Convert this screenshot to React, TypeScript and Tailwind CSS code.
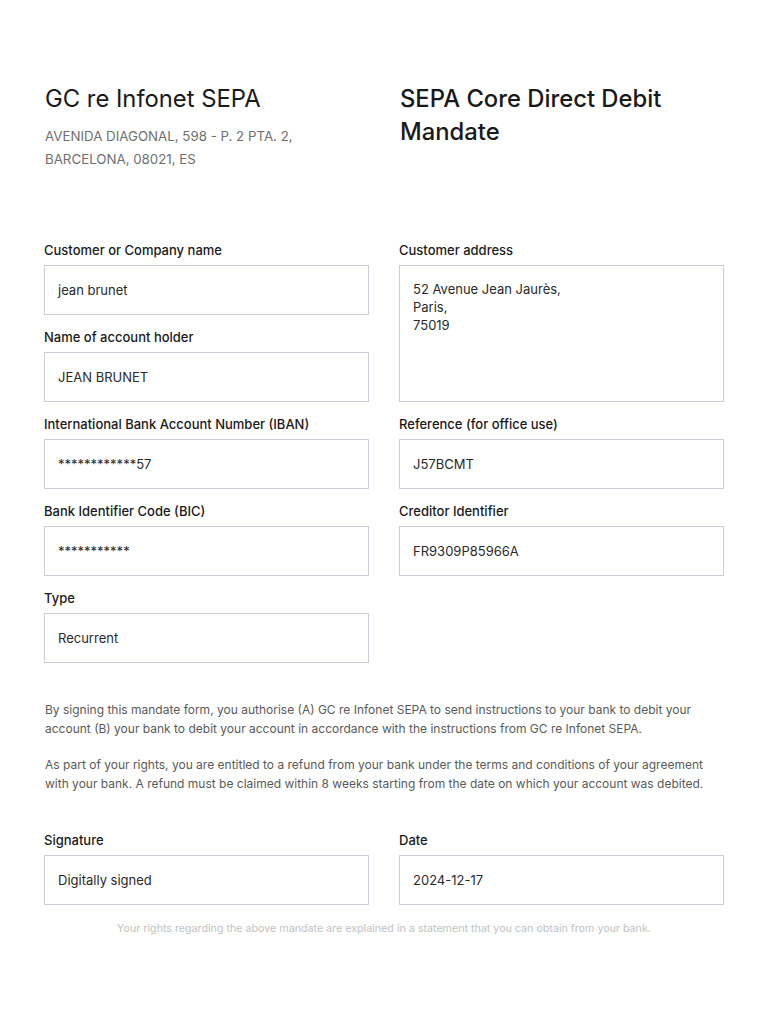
import React from "react";

const Field = ({ label, value, tall }: { label: string; value: React.ReactNode; tall?: boolean }) => (
  <div className="flex flex-col">
    <div className="h-[20px] leading-[20px] text-[13px] font-medium text-[#1a1a1a]">{label}</div>
    <div
      className={`mt-[5px] border border-[#c8cfd8] px-[13px] flex ${tall ? "h-[137px] items-start pt-[14px]" : "h-[50px] items-center"} text-[13px] text-[#2a2a2a] leading-[18px]`}
    >
      <div>{value}</div>
    </div>
  </div>
);

export default function App() {
  return (
    <div
      className="w-[768px] min-h-[1024px] bg-white px-[44px] pt-[82px]"
      style={{ fontFamily: "Inter, 'Open Sans', sans-serif" }}
    >
      <div className="grid grid-cols-2 gap-x-[30px]">
        <div>
          <div className="text-[23.8px] leading-[33px] text-[#1a1a1a] ml-[1px]">GC re Infonet SEPA</div>
          <div className="mt-[10px] text-[13.3px] leading-[23px] text-[#6f6f6f] uppercase ml-[1px]">
            <div>Avenida Diagonal, 598 - P. 2 PTA. 2,</div>
            <div>Barcelona, 08021, ES</div>
          </div>
        </div>
        <div>
          <div className="text-[23.8px] leading-[33px] font-medium text-[#1a1a1a] ml-[1px]">
            SEPA Core Direct Debit
            <br />
            Mandate
          </div>
        </div>
      </div>

      <div className="mt-[69px] grid grid-cols-2 gap-x-[30px]">
        <div className="flex flex-col gap-y-[12px]">
          <Field label="Customer or Company name" value="jean brunet" />
          <Field label="Name of account holder" value="JEAN BRUNET" />
          <Field label="International Bank Account Number (IBAN)" value="************57" />
          <Field label="Bank Identifier Code (BIC)" value="***********" />
          <Field label="Type" value="Recurrent" />
        </div>
        <div className="flex flex-col gap-y-[12px]">
          <Field
            label="Customer address"
            tall
            value={
              <>
                <div>52 Avenue Jean Jaurès,</div>
                <div>Paris,</div>
                <div>75019</div>
              </>
            }
          />
          <Field label="Reference (for office use)" value="J57BCMT" />
          <Field label="Creditor Identifier" value="FR9309P85966A" />
        </div>
      </div>

      <div className="mt-[37px] text-[12px] leading-[19px] text-[#5a5a5a] ml-[1px]">
        <p>
          By signing this mandate form, you authorise (A) GC re Infonet SEPA to send instructions to your bank to debit your
          account (B) your bank to debit your account in accordance with the instructions from GC re Infonet SEPA.
        </p>
        <p className="mt-[17px]">
          As part of your rights, you are entitled to a refund from your bank under the terms and conditions of your agreement
          with your bank. A refund must be claimed within 8 weeks starting from the date on which your account was debited.
        </p>
      </div>

      <div className="mt-[37px] grid grid-cols-2 gap-x-[30px]">
        <Field label="Signature" value="Digitally signed" />
        <Field label="Date" value="2024-12-17" />
      </div>

      <div className="mt-[17px] text-center text-[10.7px] leading-[14px] text-[#c2c2c2]">
        Your rights regarding the above mandate are explained in a statement that you can obtain from your bank.
      </div>
    </div>
  );
}
